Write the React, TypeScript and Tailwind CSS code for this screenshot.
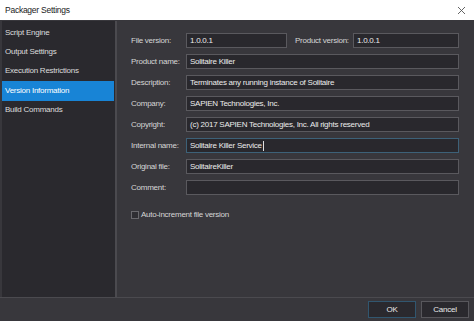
import React from "react";

// Packager Settings dialog, Version Information page
const navItems = [
  "Script Engine",
  "Output Settings",
  "Execution Restrictions",
  "Version Information",
  "Build Commands",
];

const fields: { label: string; value: string; focused?: boolean }[] = [
  { label: "Product name:", value: "Solitaire Killer" },
  { label: "Description:", value: "Terminates any running instance of Solitaire" },
  { label: "Company:", value: "SAPIEN Technologies, Inc." },
  { label: "Copyright:", value: "(c) 2017 SAPIEN Technologies, Inc. All rights reserved" },
  { label: "Internal name:", value: "Solitaire Killer Service", focused: true },
  { label: "Original file:", value: "SolitaireKiller" },
  { label: "Comment:", value: "" },
];

function Box({ value, focused, className }: { value: string; focused?: boolean; className?: string }) {
  return (
    <div
      className={`h-[15px] flex items-center pl-[3px] bg-[#29282d] border text-[#ececec] whitespace-nowrap overflow-hidden ${
        focused ? "border-[#3d6178]" : "border-[#5a595e]"
      } ${className ?? ""}`}
    >
      {value}
      {focused && <span className="w-px h-[10px] bg-[#e0e0e0] ml-px" />}
    </div>
  );
}

export default function App() {
  return (
    <div
      className="w-[474px] h-[321px] flex flex-col overflow-hidden text-[8px] tracking-[-0.25px]"
      style={{ fontFamily: '"Liberation Sans", Arial, sans-serif' }}
    >
      {/* title bar */}
      <div className="h-[20px] bg-white flex items-center justify-between pl-[5px] pr-[8px] text-[#1b1b1b] text-[8.5px]">
        <span>Packager Settings</span>
        <svg width="9" height="9" viewBox="0 0 9 9" stroke="#555" strokeWidth="0.9">
          <path d="M1 1 L8 8 M8 1 L1 8" />
        </svg>
      </div>

      <div className="flex-1 flex flex-col bg-[#38373c]">
        <div className="flex-1 flex border-b border-[#4b4a4f]">
          {/* left nav */}
          <div className="w-[115px] ml-[2px] mt-[1px] bg-[#2a292e] border-r-2 border-[#4b4a4f] pt-[2px]">
            {navItems.map((item) => (
              <div
                key={item}
                className={`h-[19.4px] flex items-center pl-[3px] ${
                  item === "Version Information" ? "bg-[#1884d6] text-white mr-[1px]" : "text-[#dcdcdc]"
                }`}
              >
                {item}
              </div>
            ))}
          </div>

          {/* right form */}
          <div className="flex-1 pt-[13px] pl-[14px] pr-[15px] flex flex-col gap-[6px] text-[#d6d6d6]">
            <div className="flex items-center">
              <span className="w-[55px]">File version:</span>
              <Box value="1.0.0.1" className="w-[101px]" />
              <span className="ml-[8px] w-[58px]">Product version:</span>
              <Box value="1.0.0.1" className="flex-1" />
            </div>
            {fields.map((f) => (
              <div key={f.label} className="flex items-center">
                <span className="w-[55px]">{f.label}</span>
                <Box value={f.value} focused={f.focused} className="flex-1" />
              </div>
            ))}
            <div className="flex items-center mt-[8px]">
              <span className="w-[8px] h-[8px] border border-[#6a696e] bg-[#2f2e33] mr-[2px]" />
              <span>Auto-increment file version</span>
            </div>
          </div>
        </div>

        {/* footer */}
        <div className="h-[23px] flex items-center justify-end gap-[5px] pr-[5px]">
          <button className="w-[48px] h-[17px] bg-[#2a292e] border border-[#31566f] text-[#e8e8e8]">OK</button>
          <button className="w-[48px] h-[17px] bg-[#2a292e] border border-[#58575c] text-[#e8e8e8]">Cancel</button>
        </div>
      </div>
    </div>
  );
}
